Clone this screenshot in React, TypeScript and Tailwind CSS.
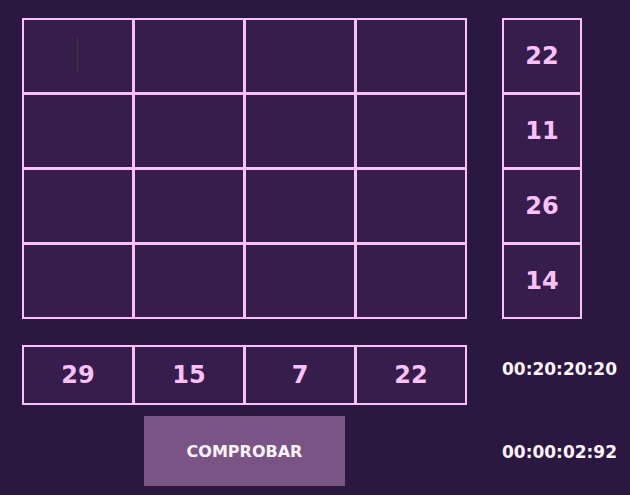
import React from "react";

const rowTargets = [22, 11, 26, 14];
const colTargets = [29, 15, 7, 22];

function Cell({ children, className = "" }: { children?: React.ReactNode; className?: string }) {
  return (
    <div className={`flex items-center justify-center bg-[#371d4c] text-[24px] font-bold text-[#f9c0f9] ${className}`}>
      {children}
    </div>
  );
}

export default function App() {
  return (
    <div
      className="min-h-screen w-full bg-[#2b1840] pl-[22px] pt-[18px]"
      style={{ fontFamily: '"DejaVu Sans", Verdana, sans-serif' }}
    >
      <div className="flex gap-[35px]">
        <div className="flex flex-col">
          {/* tablero 4x4 */}
          <div className="grid w-[445px] grid-cols-4 grid-rows-4 gap-[3px] bg-[#f9c0f9] p-[2px]">
            {Array.from({ length: 16 }).map((_, i) => (
              <Cell key={i} className="h-[72px]">
                {i === 0 && <span className="mb-[3px] mr-[1px] h-[35px] w-px bg-[#3a3a3a]" />}
              </Cell>
            ))}
          </div>

          {/* sumas de columnas */}
          <div className="mt-[26px] grid w-[445px] grid-cols-4 gap-[3px] bg-[#f9c0f9] p-[2px]">
            {colTargets.map((n, i) => (
              <Cell key={i} className="h-[56px]">
                {n}
              </Cell>
            ))}
          </div>

          <div className="mt-[11px] flex justify-center">
            <button className="flex h-[70px] w-[201px] items-center justify-center pt-[1px] bg-[#7a5485] text-[16px] font-bold text-[#fff4ff]">
              COMPROBAR
            </button>
          </div>
        </div>

        <div className="flex flex-col">
          {/* sumas de filas */}
          <div className="grid w-[80px] grid-rows-4 gap-[3px] bg-[#f9c0f9] p-[2px]">
            {rowTargets.map((n, i) => (
              <Cell key={i} className="h-[72px]">
                {n}
              </Cell>
            ))}
          </div>

          <div className="mt-[26px] flex h-[50px] items-center text-[17px] font-bold text-[#fff4ff]">
            00:20:20:20
          </div>
          <div className="mt-[33px] flex h-[50px] items-center text-[17px] font-bold text-[#fff4ff]">
            00:00:02:92
          </div>
        </div>
      </div>
    </div>
  );
}
